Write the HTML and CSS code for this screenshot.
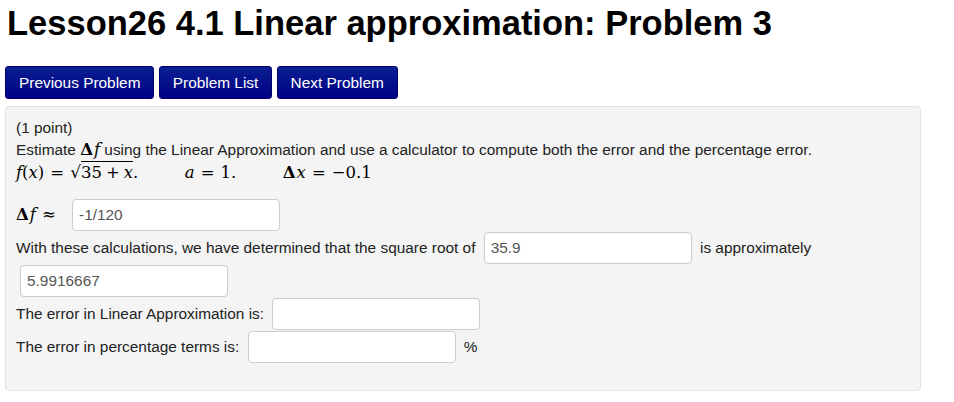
FILE: index.html
```html
<!DOCTYPE html>
<html lang="en">
<head>
    <meta charset="UTF-8">
    <meta name="viewport" content="width=device-width, initial-scale=1.0">
    <title>Lesson26 4.1 Linear approximation: Problem 3</title>
    <link rel="stylesheet" href="styles.css">
</head>
<body>
    <h1 class="title">Lesson26 4.1 Linear approximation: Problem 3</h1>
    <div class="nav">
        <button class="nav-btn">Previous Problem</button>
        <button class="nav-btn">Problem List</button>
        <button class="nav-btn">Next Problem</button>
    </div>
    <div class="problem">
        <div class="points">(1 point)</div>
        <div class="text">
            Estimate <span class="math"><span class="up">&Delta;</span><i>f</i></span> using the Linear Approximation and use a calculator to compute both the error and the percentage error.
        </div>
        <div class="math math-line">
            <i>f</i>(<i>x</i>)<span class="rel">=</span><span class="sqrt"><span class="radic">&radic;</span><span class="radicand">35<span class="bin">+</span><i>x</i></span></span>.
            <span class="qquad"></span>
            <i>a</i><span class="rel">=</span>1.
            <span class="qquad"></span>
            <span class="up">&Delta;</span><i>x</i><span class="rel">=</span>&minus;0.1
        </div>
        <div class="answers">
            <div class="row">
                <span class="math"><span class="up">&Delta;</span><i>f</i><span class="rel">&asymp;</span></span>
                <input type="text" class="answer" value="-1/120">
            </div>
            <div class="row">
                With these calculations, we have determined that the square root of
                <input type="text" class="answer" value="35.9">
                is approximately
                <input type="text" class="answer" value="5.9916667">
            </div>
            <div class="row">
                The error in Linear Approximation is:
                <input type="text" class="answer">
            </div>
            <div class="row">
                The error in percentage terms is:
                <input type="text" class="answer">
                %
            </div>
        </div>
    </div>
</body>
</html>
```

FILE: styles.css
```css
* {
    box-sizing: border-box;
}
body {
    margin: 0;
    padding: 0 5px;
    background: #fff;
    color: #222;
    font-family: "Liberation Sans", Arial, sans-serif;
    font-size: 15.4px;
    line-height: 22px;
}
.title {
    font-size: 34.5px;
    line-height: 38px;
    font-weight: bold;
    color: #000;
    margin: 4px 0 24px 2px;
}
.nav {
    margin-bottom: 7px;
}
.nav-btn {
    font-family: "Liberation Sans", Arial, sans-serif;
    font-size: 15.4px;
    line-height: 20px;
    color: #fff;
    background: linear-gradient(#0a1f92, #000084);
    border: 1px solid #00006e;
    border-radius: 3px;
    padding: 5px 13px;
    margin: 0;
    height: 33px;
    cursor: pointer;
}
.problem {
    width: 916px;
    background: #f4f4f4;
    border: 1px solid #e2e2e2;
    border-radius: 4px;
    padding: 10px 10px 26px;
}
.math {
    font-family: "DejaVu Serif", "Liberation Serif", serif;
    font-size: 16.5px;
    color: #000;
}
.math i {
    font-style: italic;
}
.math .up {
    font-weight: bold;
    margin-right: 1px;
}
.math-line {
    line-height: 22px;
    margin-bottom: 15px;
}
.rel {
    padding: 0 6px;
}
.bin {
    padding: 0 4px;
}
.qquad {
    display: inline-block;
    width: 36px;
}
.sqrt {
    white-space: nowrap;
}
.radic {
    font-size: 17px;
}
.radicand {
    border-top: 1px solid #000;
    padding-top: 1px;
}
.row {
    min-height: 33px;
}
.row .math {
    margin-right: 2px;
}
.answer {
    font-family: "Liberation Sans", Arial, sans-serif;
    font-size: 15.4px;
    color: #555;
    width: 208px;
    height: 32px;
    padding: 4px 6px;
    margin: 0 4px 1px;
    border: 1px solid #ccc;
    border-radius: 4px;
    background: #fff;
    vertical-align: middle;
}
```
